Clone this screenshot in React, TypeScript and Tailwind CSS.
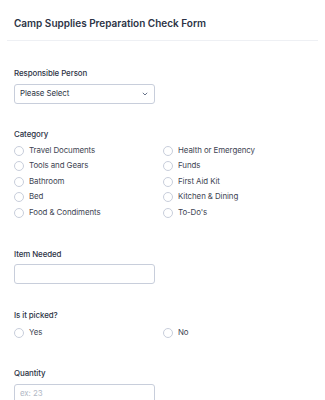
import React from "react";

const categories = [
  "Travel Documents",
  "Health or Emergency",
  "Tools and Gears",
  "Funds",
  "Bathroom",
  "First Aid Kit",
  "Bed",
  "Kitchen & Dining",
  "Food & Condiments",
  "To-Do's",
];

function Radio({ label }: { label: string }) {
  return (
    <label className="flex h-[15.5px] items-center gap-[5px]">
      <span className="h-[10px] w-[10px] shrink-0 rounded-full border border-[#c8cedb] bg-white" />
      <span className="text-[7.9px] tracking-[-0.01em] text-[#3e4452]">{label}</span>
    </label>
  );
}

function Label({ children }: { children: React.ReactNode }) {
  return (
    <div className="text-[7.9px] font-medium leading-[12px] tracking-[-0.01em] text-[#2c3345]">{children}</div>
  );
}

export default function App() {
  return (
    <div className="h-[400px] w-[325px] overflow-hidden bg-white font-['Inter',sans-serif]">
      {/* header */}
      <div className="mx-[7px] border-b border-[#eef0f4] px-[7px] pb-[10px] pt-[17px]">
        <h1 className="text-[10px] font-semibold leading-[13px] text-[#2c3345]">
          Camp Supplies Preparation Check Form
        </h1>
      </div>

      <div className="px-[14px]">
        {/* responsible person */}
        <div className="mt-[26px]">
          <Label>Responsible Person</Label>
          <div className="mt-[5px] flex h-[20px] w-[141px] items-center justify-between rounded-[3px] border border-[#c8cedb] px-[5px]">
            <span className="text-[7.9px] tracking-[-0.01em] text-[#2c3345]">Please Select</span>
            <svg width="6" height="4" viewBox="0 0 6 4" className="mr-[1px]">
              <path d="M0.8 0.8 L3 3 L5.2 0.8" fill="none" stroke="#57647e" strokeWidth="0.9" />
            </svg>
          </div>
        </div>

        {/* category */}
        <div className="mt-[24px]">
          <Label>Category</Label>
          <div className="mt-[3px] grid w-[298px] grid-cols-2">
            {categories.map((c) => (
              <Radio key={c} label={c} />
            ))}
          </div>
        </div>

        {/* item needed */}
        <div className="mt-[27px]">
          <Label>Item Needed</Label>
          <div className="mt-[4px] h-[20px] w-[141px] rounded-[3px] border border-[#c8cedb]" />
        </div>

        {/* picked */}
        <div className="mt-[25px]">
          <Label>Is it picked?</Label>
          <div className="mt-[5px] grid w-[298px] grid-cols-2">
            <Radio label="Yes" />
            <Radio label="No" />
          </div>
        </div>

        {/* quantity */}
        <div className="mt-[26px]">
          <Label>Quantity</Label>
          <div className="mt-[5px] flex h-[20px] w-[141px] items-center rounded-[3px] border border-[#c8cedb] px-[5px]">
            <span className="text-[7.9px] tracking-[-0.01em] text-[#b2b9c6]">ex: 23</span>
          </div>
        </div>
      </div>
    </div>
  );
}
